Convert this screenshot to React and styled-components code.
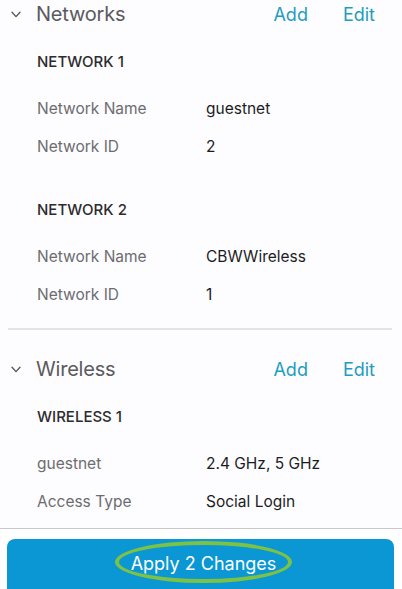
import React from 'react'
import styled, { createGlobalStyle } from 'styled-components'

const GlobalStyle = createGlobalStyle`
  html, body {
    margin: 0;
    padding: 0;
    background: #fdfcfe;
    overflow: hidden;
  }
  body {
    font-family: Inter, "Liberation Sans", sans-serif;
    -webkit-font-smoothing: antialiased;
  }
`;

const Page = styled.div`
  height: 589px;
  display: flex;
  flex-direction: column;
`;

const Content = styled.div`
  flex: 1;
  overflow: hidden;
  padding: 0 10px 0 8px;
`;

const Section = styled.section`
  border-bottom: ${p => (p.$divider ? '2px solid #e4e3e8' : 'none')};
  padding-bottom: ${p => (p.$divider ? '15px' : '0')};
  margin-bottom: ${p => (p.$divider ? '25px' : '0')};
`;

const Header = styled.div`
  display: flex;
  align-items: center;
  height: 28px;
`;

const Chevron = styled.svg`
  width: 10px;
  height: 7px;
  margin-left: 3px;
  margin-right: 15px;
  flex-shrink: 0;
`;

const Title = styled.h2`
  flex: 1;
  margin: 0;
  font-size: 20px;
  font-weight: 400;
  color: #5a5a5e;
  letter-spacing: -0.2px;
`;

const Action = styled.a`
  font-size: 18px;
  color: #1e9dbf;
  margin-right: ${p => p.$last ? '17px' : '35px'};
  cursor: pointer;
`;

const Group = styled.div`
  padding-left: 29px;
  margin-top: ${p => p.$first ? '24px' : '35px'};
`;

const SubHeading = styled.h3`
  margin: 0 0 17px;
  font-size: 15px;
  line-height: 20px;
  font-weight: 500;
  color: #2c2c2e;
`;

const Row = styled.div`
  display: grid;
  grid-template-columns: 169px 1fr;
  align-items: center;
  height: 38px;
  font-size: 15.5px;
`;

const Label = styled.span`
  color: #6c6c70;
`;

const Value = styled.span`
  color: #1c1c1e;
`;

const Footer = styled.div`
  flex-shrink: 0;
  height: 50px;
  overflow: hidden;
  border-top: 1.5px solid #c9c8cc;
  background: #ffffff;
  padding: 10px 8px 0 7px;
`;

const ApplyButton = styled.button`
  width: 100%;
  height: 60px;
  border: none;
  border-radius: 8px;
  background: #0a97d4;
  display: flex;
  justify-content: center;
  align-items: flex-start;
  padding: 2px 0 0 6px;
  font-family: inherit;
`;

const Highlight = styled.span`
  display: inline-block;
  border: 4px solid #7dc244;
  border-radius: 50%;
  padding: 7px 12px 3px;
  font-size: 18px;
  line-height: 24px;
  color: #ffffff;
`;

const sections = [
  {
    title: 'Networks',
    divider: true,
    groups: [
      { name: 'NETWORK 1', rows: [['Network Name', 'guestnet'], ['Network ID', '2']] },
      { name: 'NETWORK 2', rows: [['Network Name', 'CBWWireless'], ['Network ID', '1']] },
    ],
  },
  {
    title: 'Wireless',
    groups: [
      { name: 'WIRELESS 1', rows: [['guestnet', '2.4 GHz, 5 GHz'], ['Access Type', 'Social Login']] },
    ],
  },
];

const App = () => {
  return (
    <Page>
      <GlobalStyle />
      <Content>
        {sections.map(s => (
          <Section key={s.title} $divider={s.divider}>
            <Header>
              <Chevron viewBox="0 0 10 7">
                <path d="M1 1.2 L5 5.6 L9 1.2" fill="none" stroke="#555558" strokeWidth="1.3" strokeLinecap="round" strokeLinejoin="round" />
              </Chevron>
              <Title>{s.title}</Title>
              <Action>Add</Action>
              <Action $last>Edit</Action>
            </Header>
            {s.groups.map((g, i) => (
              <Group key={g.name} $first={i === 0}>
                <SubHeading>{g.name}</SubHeading>
                {g.rows.map(([l, v]) => (
                  <Row key={l}>
                    <Label>{l}</Label>
                    <Value>{v}</Value>
                  </Row>
                ))}
              </Group>
            ))}
          </Section>
        ))}
      </Content>
      <Footer>
        <ApplyButton>
          <Highlight>Apply 2 Changes</Highlight>
        </ApplyButton>
      </Footer>
    </Page>
  )
}

export default App
